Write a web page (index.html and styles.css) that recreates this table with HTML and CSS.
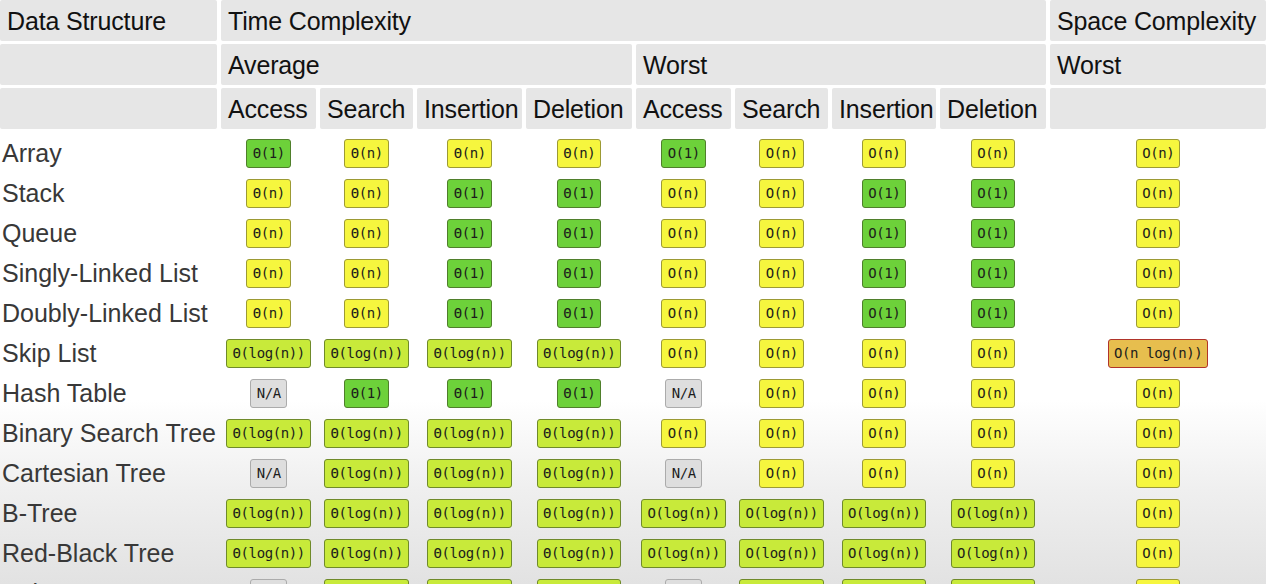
FILE: index.html
```html
<!DOCTYPE html>
<html>
<head>
<meta charset="utf-8">
<link rel="stylesheet" href="styles.css">
</head>
<body>
<div class="sheet">
  <div class="head">
    <div class="h">Data Structure</div>
    <div class="h span8">Time Complexity</div>
    <div class="h">Space Complexity</div>

    <div class="h"></div>
    <div class="h span4">Average</div>
    <div class="h span4">Worst</div>
    <div class="h">Worst</div>

    <div class="h"></div>
    <div class="h">Access</div>
    <div class="h">Search</div>
    <div class="h">Insertion</div>
    <div class="h">Deletion</div>
    <div class="h">Access</div>
    <div class="h">Search</div>
    <div class="h">Insertion</div>
    <div class="h">Deletion</div>
    <div class="h"></div>
  </div>

  <div class="rows">
    <div class="label">Array</div>
    <div class="cell"><code class="b g">Θ(1)</code></div>
    <div class="cell"><code class="b y">Θ(n)</code></div>
    <div class="cell"><code class="b y">Θ(n)</code></div>
    <div class="cell"><code class="b y">Θ(n)</code></div>
    <div class="cell"><code class="b g">O(1)</code></div>
    <div class="cell"><code class="b y">O(n)</code></div>
    <div class="cell"><code class="b y">O(n)</code></div>
    <div class="cell"><code class="b y">O(n)</code></div>
    <div class="cell"><code class="b y">O(n)</code></div>

    <div class="label">Stack</div>
    <div class="cell"><code class="b y">Θ(n)</code></div>
    <div class="cell"><code class="b y">Θ(n)</code></div>
    <div class="cell"><code class="b g">Θ(1)</code></div>
    <div class="cell"><code class="b g">Θ(1)</code></div>
    <div class="cell"><code class="b y">O(n)</code></div>
    <div class="cell"><code class="b y">O(n)</code></div>
    <div class="cell"><code class="b g">O(1)</code></div>
    <div class="cell"><code class="b g">O(1)</code></div>
    <div class="cell"><code class="b y">O(n)</code></div>

    <div class="label">Queue</div>
    <div class="cell"><code class="b y">Θ(n)</code></div>
    <div class="cell"><code class="b y">Θ(n)</code></div>
    <div class="cell"><code class="b g">Θ(1)</code></div>
    <div class="cell"><code class="b g">Θ(1)</code></div>
    <div class="cell"><code class="b y">O(n)</code></div>
    <div class="cell"><code class="b y">O(n)</code></div>
    <div class="cell"><code class="b g">O(1)</code></div>
    <div class="cell"><code class="b g">O(1)</code></div>
    <div class="cell"><code class="b y">O(n)</code></div>

    <div class="label">Singly-Linked List</div>
    <div class="cell"><code class="b y">Θ(n)</code></div>
    <div class="cell"><code class="b y">Θ(n)</code></div>
    <div class="cell"><code class="b g">Θ(1)</code></div>
    <div class="cell"><code class="b g">Θ(1)</code></div>
    <div class="cell"><code class="b y">O(n)</code></div>
    <div class="cell"><code class="b y">O(n)</code></div>
    <div class="cell"><code class="b g">O(1)</code></div>
    <div class="cell"><code class="b g">O(1)</code></div>
    <div class="cell"><code class="b y">O(n)</code></div>

    <div class="label">Doubly-Linked List</div>
    <div class="cell"><code class="b y">Θ(n)</code></div>
    <div class="cell"><code class="b y">Θ(n)</code></div>
    <div class="cell"><code class="b g">Θ(1)</code></div>
    <div class="cell"><code class="b g">Θ(1)</code></div>
    <div class="cell"><code class="b y">O(n)</code></div>
    <div class="cell"><code class="b y">O(n)</code></div>
    <div class="cell"><code class="b g">O(1)</code></div>
    <div class="cell"><code class="b g">O(1)</code></div>
    <div class="cell"><code class="b y">O(n)</code></div>

    <div class="label">Skip List</div>
    <div class="cell"><code class="b yg">Θ(log(n))</code></div>
    <div class="cell"><code class="b yg">Θ(log(n))</code></div>
    <div class="cell"><code class="b yg">Θ(log(n))</code></div>
    <div class="cell"><code class="b yg">Θ(log(n))</code></div>
    <div class="cell"><code class="b y">O(n)</code></div>
    <div class="cell"><code class="b y">O(n)</code></div>
    <div class="cell"><code class="b y">O(n)</code></div>
    <div class="cell"><code class="b y">O(n)</code></div>
    <div class="cell"><code class="b o">O(n log(n))</code></div>

    <div class="label">Hash Table</div>
    <div class="cell"><code class="b na">N/A</code></div>
    <div class="cell"><code class="b g">Θ(1)</code></div>
    <div class="cell"><code class="b g">Θ(1)</code></div>
    <div class="cell"><code class="b g">Θ(1)</code></div>
    <div class="cell"><code class="b na">N/A</code></div>
    <div class="cell"><code class="b y">O(n)</code></div>
    <div class="cell"><code class="b y">O(n)</code></div>
    <div class="cell"><code class="b y">O(n)</code></div>
    <div class="cell"><code class="b y">O(n)</code></div>

    <div class="label">Binary Search Tree</div>
    <div class="cell"><code class="b yg">Θ(log(n))</code></div>
    <div class="cell"><code class="b yg">Θ(log(n))</code></div>
    <div class="cell"><code class="b yg">Θ(log(n))</code></div>
    <div class="cell"><code class="b yg">Θ(log(n))</code></div>
    <div class="cell"><code class="b y">O(n)</code></div>
    <div class="cell"><code class="b y">O(n)</code></div>
    <div class="cell"><code class="b y">O(n)</code></div>
    <div class="cell"><code class="b y">O(n)</code></div>
    <div class="cell"><code class="b y">O(n)</code></div>

    <div class="label">Cartesian Tree</div>
    <div class="cell"><code class="b na">N/A</code></div>
    <div class="cell"><code class="b yg">Θ(log(n))</code></div>
    <div class="cell"><code class="b yg">Θ(log(n))</code></div>
    <div class="cell"><code class="b yg">Θ(log(n))</code></div>
    <div class="cell"><code class="b na">N/A</code></div>
    <div class="cell"><code class="b y">O(n)</code></div>
    <div class="cell"><code class="b y">O(n)</code></div>
    <div class="cell"><code class="b y">O(n)</code></div>
    <div class="cell"><code class="b y">O(n)</code></div>

    <div class="label">B-Tree</div>
    <div class="cell"><code class="b yg">Θ(log(n))</code></div>
    <div class="cell"><code class="b yg">Θ(log(n))</code></div>
    <div class="cell"><code class="b yg">Θ(log(n))</code></div>
    <div class="cell"><code class="b yg">Θ(log(n))</code></div>
    <div class="cell"><code class="b yg">O(log(n))</code></div>
    <div class="cell"><code class="b yg">O(log(n))</code></div>
    <div class="cell"><code class="b yg">O(log(n))</code></div>
    <div class="cell"><code class="b yg">O(log(n))</code></div>
    <div class="cell"><code class="b y">O(n)</code></div>

    <div class="label">Red-Black Tree</div>
    <div class="cell"><code class="b yg">Θ(log(n))</code></div>
    <div class="cell"><code class="b yg">Θ(log(n))</code></div>
    <div class="cell"><code class="b yg">Θ(log(n))</code></div>
    <div class="cell"><code class="b yg">Θ(log(n))</code></div>
    <div class="cell"><code class="b yg">O(log(n))</code></div>
    <div class="cell"><code class="b yg">O(log(n))</code></div>
    <div class="cell"><code class="b yg">O(log(n))</code></div>
    <div class="cell"><code class="b yg">O(log(n))</code></div>
    <div class="cell"><code class="b y">O(n)</code></div>

    <div class="label">Splay Tree</div>
    <div class="cell"><code class="b na">N/A</code></div>
    <div class="cell"><code class="b yg">Θ(log(n))</code></div>
    <div class="cell"><code class="b yg">Θ(log(n))</code></div>
    <div class="cell"><code class="b yg">Θ(log(n))</code></div>
    <div class="cell"><code class="b na">N/A</code></div>
    <div class="cell"><code class="b yg">O(log(n))</code></div>
    <div class="cell"><code class="b yg">O(log(n))</code></div>
    <div class="cell"><code class="b yg">O(log(n))</code></div>
    <div class="cell"><code class="b y">O(n)</code></div>
  </div>
</div>
</body>
</html>
```
FILE: styles.css
```css
html, body {
  margin: 0;
  padding: 0;
  height: 100%;
  overflow: hidden;
}
body {
  background: linear-gradient(to bottom, #ffffff 0, #ffffff 400px, #efefef 490px, #e2e2e2 584px);
  font-family: "Liberation Sans", Arial, sans-serif;
}
.sheet {
  width: 1266px;
}
.head, .rows {
  display: grid;
  grid-template-columns: 217px 95px 93px 105px 106px 95px 93px 104px 106px 216px;
  column-gap: 4px;
}
.head {
  grid-auto-rows: 41px;
  row-gap: 3px;
}
.h {
  background: #e6e6e6;
  border-radius: 2px;
  color: #111;
  font-size: 25px;
  line-height: 40px;
  padding-top: 1px;
  padding-left: 7px;
  letter-spacing: -0.15px;
  white-space: nowrap;
  overflow: hidden;
}
.span8 { grid-column: span 8; }
.span4 { grid-column: span 4; }
.rows {
  grid-auto-rows: 40px;
  margin-top: 4px;
}
.label {
  color: #383838;
  font-size: 25px;
  line-height: 40px;
  padding-left: 2px;
  white-space: nowrap;
}
.cell {
  display: flex;
  align-items: center;
  justify-content: center;
}
.b {
  font-family: "DejaVu Sans Mono", "Liberation Mono", monospace;
  font-size: 14px;
  letter-spacing: -0.4px;
  line-height: 19px;
  padding: 4px 5px 4px 5.4px;
  border: 1px solid;
  border-radius: 3px;
  color: #1c1c1c;
  white-space: pre;
}
.g { background: #6dd13a; border-color: #4f7f2b; }
.yg { background: #c8ea3a; border-color: #6f8a2a; }
.y { background: #f6f63e; border-color: #9c9a34; }
.o { background: #e7be4e; border-color: #b0342a; }
.na { background: #dedede; border-color: #ababab; }
```
